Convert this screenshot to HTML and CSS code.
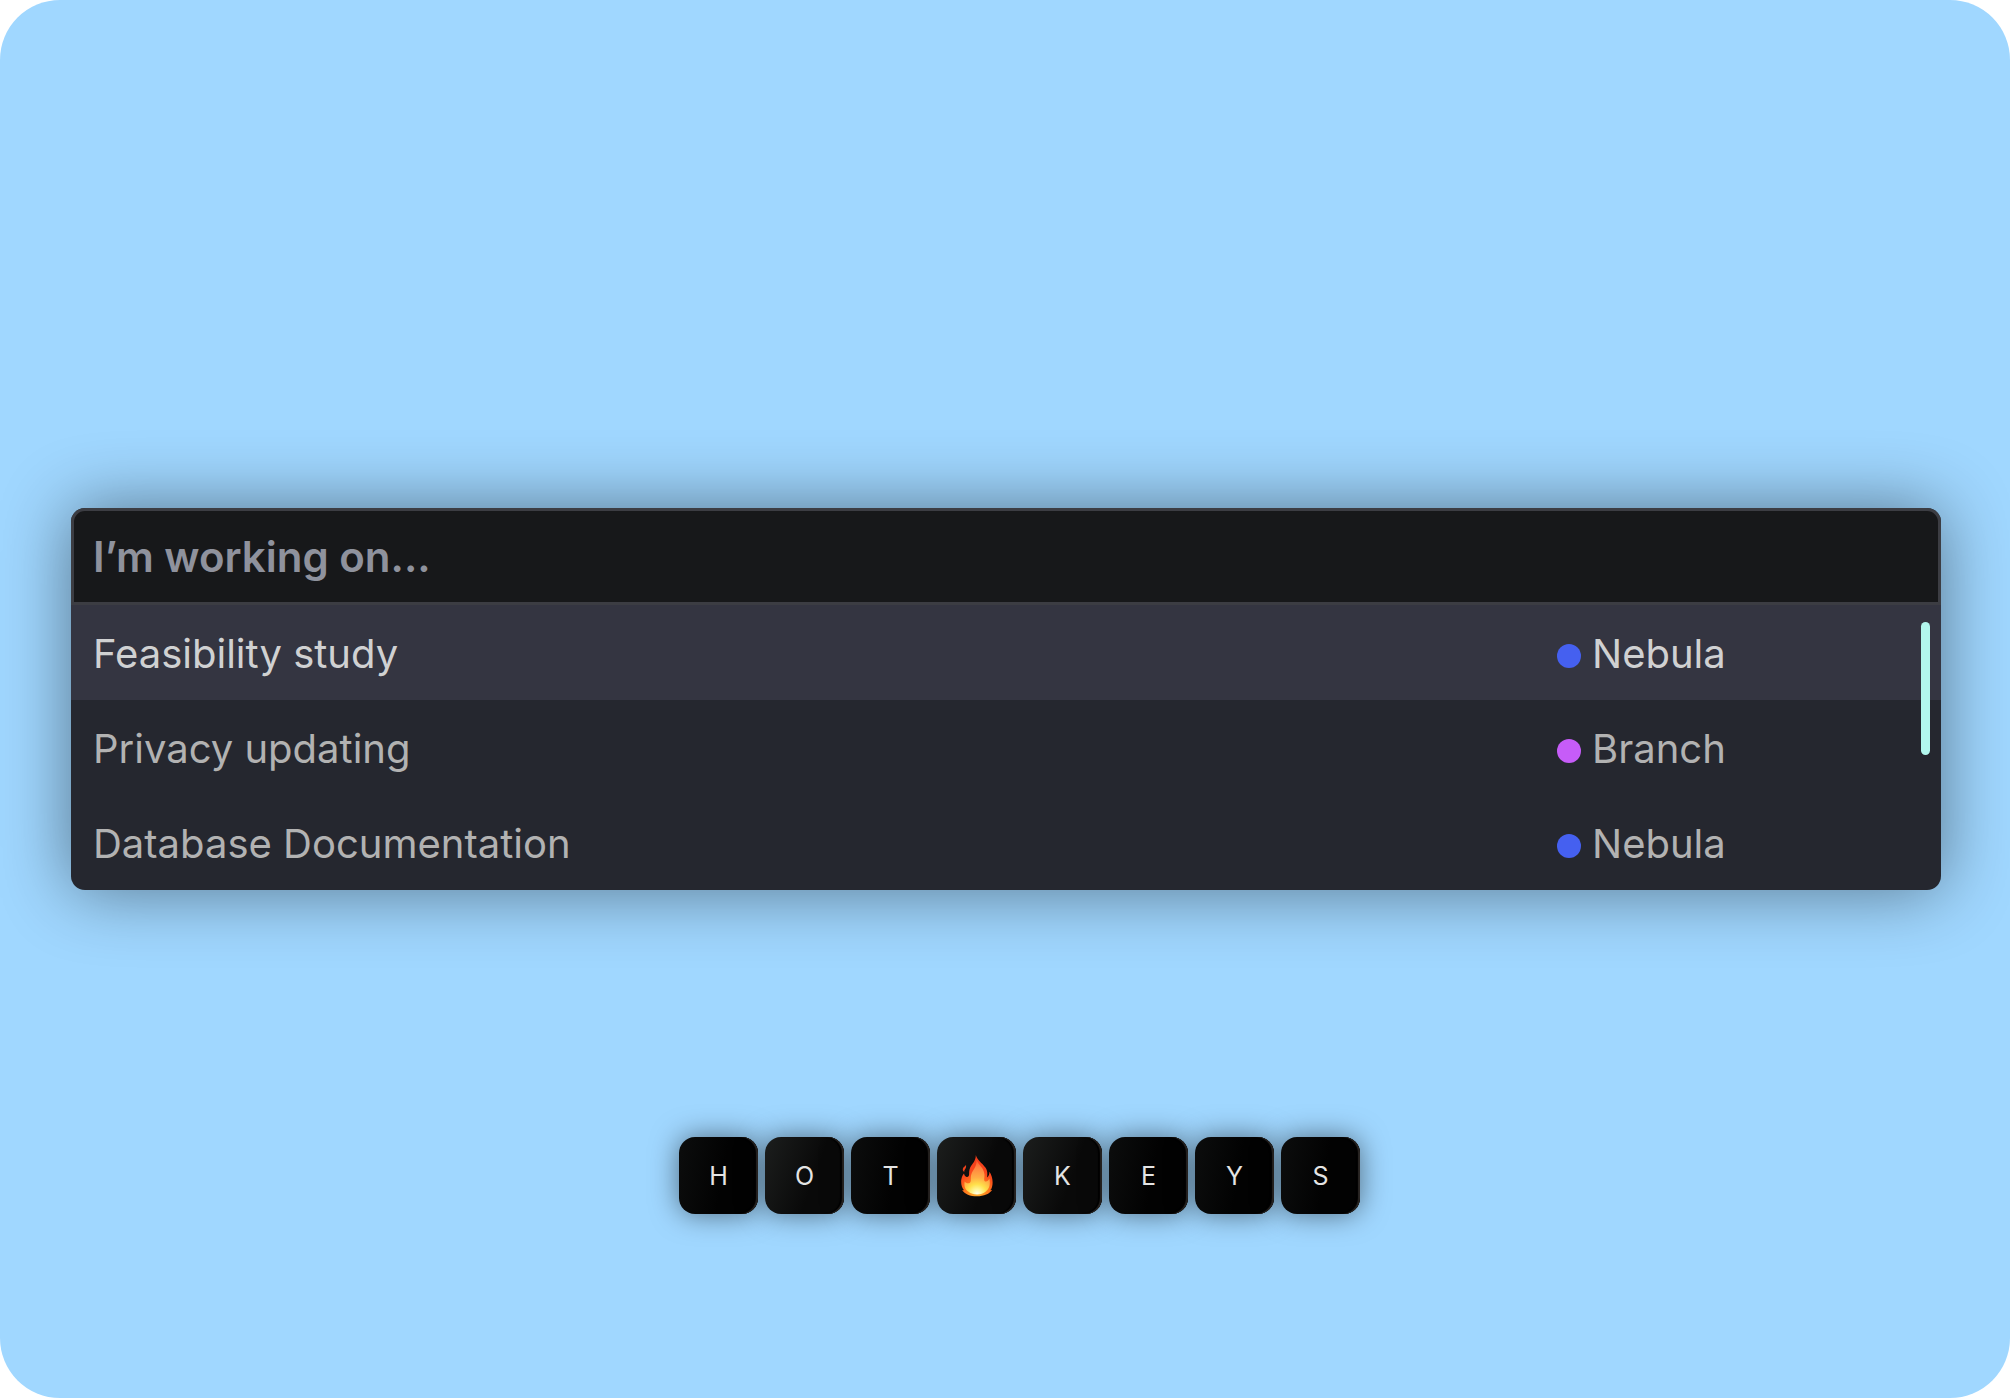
FILE: index.html
```html
<!DOCTYPE html>
<html lang="en">
<head>
<meta charset="utf-8">
<meta name="viewport" content="width=device-width, initial-scale=1">
<title>Hotkeys</title>
<link rel="stylesheet" href="styles.css">
</head>
<body>
<main class="stage">
  <section class="picker">
    <input class="picker-input" type="text" placeholder="I’m working on..." aria-label="I’m working on...">
    <ul class="tasks">
      <li class="task is-active"><span>Feasibility study</span><span class="project project-blue">Nebula</span></li>
      <li class="task"><span>Privacy updating</span><span class="project project-violet">Branch</span></li>
      <li class="task"><span>Database Documentation</span><span class="project project-blue">Nebula</span></li>
    </ul>
    <div class="scroll-thumb"></div>
  </section>
  <div class="keys">
    <kbd class="key">H</kbd>
    <kbd class="key key-lit">O</kbd>
    <kbd class="key">T</kbd>
    <kbd class="key key-lit">
      <svg class="flame" viewBox="0 0 32 42" aria-hidden="true">
        <defs>
          <radialGradient id="outer" gradientUnits="userSpaceOnUse" cx="16" cy="38" r="38">
            <stop offset="0" stop-color="#ffb52e"/>
            <stop offset=".3" stop-color="#ff7a1c"/>
            <stop offset=".55" stop-color="#fa481c"/>
            <stop offset="1" stop-color="#ee3a1a"/>
          </radialGradient>
          <radialGradient id="inner" gradientUnits="userSpaceOnUse" cx="16" cy="39" r="33">
            <stop offset="0" stop-color="#fffff0"/>
            <stop offset=".14" stop-color="#fff69a"/>
            <stop offset=".3" stop-color="#ffe04a"/>
            <stop offset=".5" stop-color="#ffad45"/>
            <stop offset=".8" stop-color="#ff8440"/>
            <stop offset="1" stop-color="#fc5c30"/>
          </radialGradient>
        </defs>
        <path fill="url(#outer)" d="M14.800 0C16.200 5 21 8 24.400 12.500c2.300 3.200 2 6.500 1.700 10 1.500-1 2.300-3 2.300-5.800 3 4.200 4 10.300 2.600 15.300-.4 1.500-1 2.500-1.700 3.200l1.900-.5C28.600 39 23 41.200 16 41.200S3.600 39 1.200 34.900l1.800.4C.8 32.500-.3 28.500.3 24.500.8 21.500 2 19.800 3 18.500c.2 1.500 1 2.700 2.200 3.300 1.600.6 2.800-.4 2.900-2.200.1-2-.2-4.300 1.200-7.300C10.700 9 15 6 14.800 0z"/>
        <path fill="#f2431b" d="M5 9.800c.4 2.400-.2 3.600-1.100 4.600-.7.900-.8 1.700-.4 2.700-1.800-.8-2.200-2.700-1.200-4.300C3 11.700 4.300 11.300 5 9.800z"/>
        <path fill="url(#inner)" d="M15.500 5c2 5 7.600 8 8 14.500.1 2.500-.8 5.500 0 6.500 1.500 1.500 4-.2 4.800-2.500 1.300 5.500.3 10-3.500 13-4 3.800-13 3.800-17.200.2C4.400 35 2.700 31 3.700 26.500c1 1.800 3.900 2.500 5.300 1.200 1.600-1.600.2-4.500 1.300-8.200C11.500 15 16 12 15.500 5z"/>
      </svg>
    </kbd>
    <kbd class="key key-lit">K</kbd>
    <kbd class="key">E</kbd>
    <kbd class="key">Y</kbd>
    <kbd class="key">S</kbd>
  </div>
</main>
</body>
</html>
```
FILE: styles.css
```css
*, *::before { box-sizing: border-box; }

body {
  margin: 0;
  background: #fff;
  font-family: Inter, "Liberation Sans", sans-serif;
}

.stage {
  min-height: 100vh;
  padding: 0 69px 0 71px;
  display: grid;
  grid-template-rows: 1fr auto 1fr;
  background: #a0d7ff;
  border-radius: 60px;
}

.picker {
  grid-row: 2;
  position: relative;
  border-radius: 14px;
  background: #25272f;
  box-shadow: 0 0 70px rgba(0, 0, 0, .46);
}

.picker-input {
  display: block;
  width: 100%;
  height: 97px;
  padding: 0 19px;
  border: 3px solid #3c3d43;
  border-radius: 14px 14px 0 0;
  background: #17181a;
  color: #c9cbd1;
  font: 600 42px/48px Inter, "Liberation Sans", sans-serif;
  outline: none;
}

.picker-input::placeholder { color: #8f929d; opacity: 1; }

.tasks {
  margin: 0;
  padding: 0;
  list-style: none;
}

.task {
  display: grid;
  grid-template-columns: 1fr 384px;
  align-items: center;
  height: 95px;
  padding: 3px 0 0 22px;
  color: #b2b2b2;
  font-size: 40px;
  line-height: 48px;
}

.task.is-active { background: #343541; color: #d0d1d2; }

.task:last-child { border-radius: 0 0 14px 14px; }

.project {
  display: flex;
  align-items: center;
  gap: 11px;
}

.project::before {
  content: "";
  width: 24px;
  height: 24px;
  margin-top: 4px;
  border-radius: 50%;
  background: var(--dot);
}

.project-blue { --dot: #4560f0; }
.project-violet { --dot: #c65cf8; }

.scroll-thumb {
  position: absolute;
  top: 114px;
  right: 11px;
  width: 9px;
  height: 133px;
  border-radius: 5px;
  background: #b2f7ee;
}

.keys {
  grid-row: 3;
  display: flex;
  justify-content: center;
  align-items: flex-start;
  gap: 7px;
  padding: 247px 0 0 27px;
}

.key {
  display: flex;
  justify-content: center;
  align-items: center;
  width: 79px;
  height: 77px;
  border-radius: 16px;
  background: linear-gradient(100deg, #0c0d0d, #020202 55%);
  box-shadow: 0 0 28px rgba(0, 0, 0, .5), inset -2px 0 1px #2b2725, inset -4px 0 1px #000;
  color: #e4e4e4;
  font: 400 25px/32px Inter, "Liberation Sans", sans-serif;
}

.key-lit { background: linear-gradient(110deg, #1c1e1d, #090909 60%); }

.flame { width: 32px; height: 42px; }
```
